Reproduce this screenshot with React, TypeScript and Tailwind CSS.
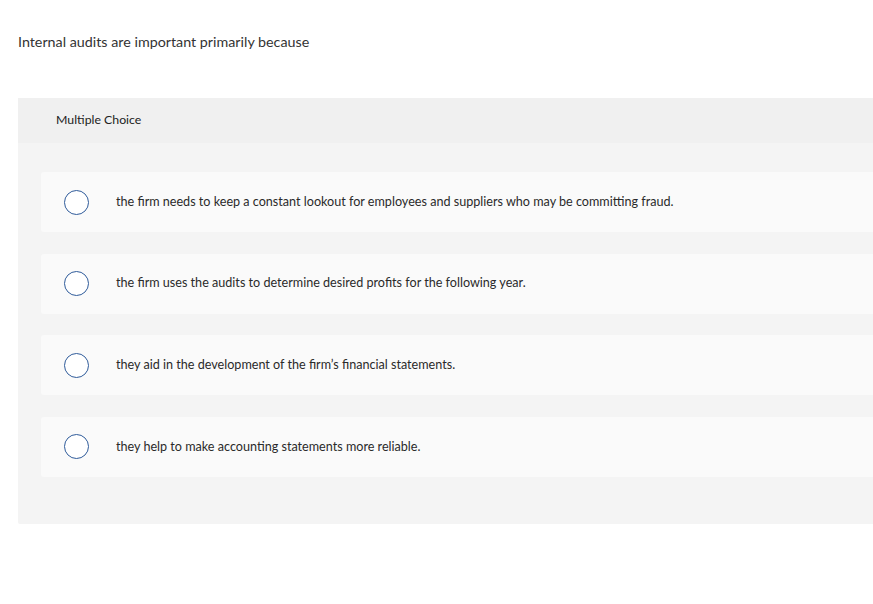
import React from "react";

const options = [
  "the firm needs to keep a constant lookout for employees and suppliers who may be committing fraud.",
  "the firm uses the audits to determine desired profits for the following year.",
  "they aid in the development of the firm\u2019s financial statements.",
  "they help to make accounting statements more reliable.",
];

export default function App() {
  return (
    <div className="w-[873px] h-[604px] bg-white overflow-hidden text-[#333]" style={{ fontFamily: "Lato, 'Open Sans', sans-serif" }}>
      <div className="pl-[18px] pt-[33px] text-[14.3px] leading-[18px] text-[#333]">
        Internal audits are important primarily because
      </div>
      <div className="ml-[18px] mt-[47px] bg-[#f4f4f4] rounded-l-[2px]">
        <div className="h-[45px] bg-[#f0f0f0] pl-[38px] flex items-center text-[12.3px] text-[#222]">
          Multiple Choice
        </div>
        <div className="pl-[23px] pt-[29px] pb-[47px] flex flex-col gap-[21.67px]">
          {options.map((o) => (
            <div key={o} className="h-[60px] bg-[#fafafa] rounded-l-[3px] flex items-center">
              <div className="ml-[23px] w-[25px] h-[25px] rounded-full border-[1.5px] border-[#2f5b9a] bg-white shrink-0" />
              <div className="ml-[27px] text-[12.6px] text-[#2a2a2a]">{o}</div>
            </div>
          ))}
        </div>
      </div>
    </div>
  );
}
